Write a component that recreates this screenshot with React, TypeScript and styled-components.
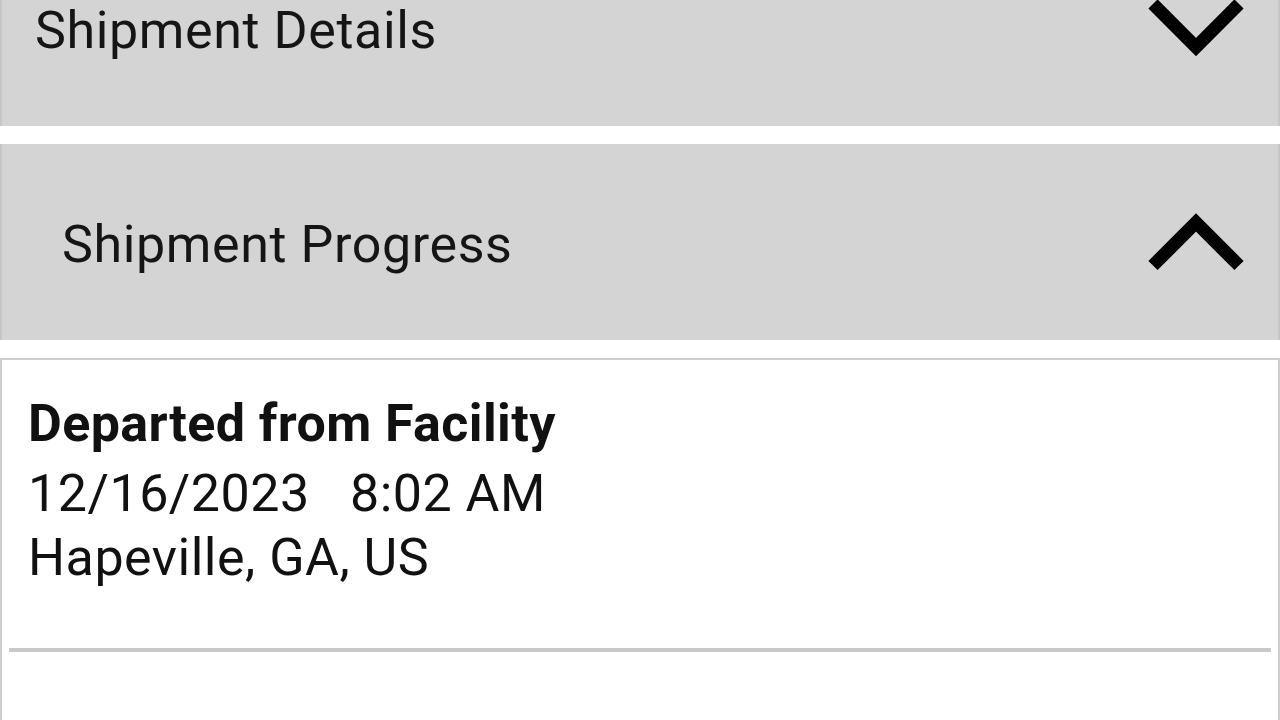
import styled, { createGlobalStyle } from 'styled-components';

const GlobalStyle = createGlobalStyle`
  html, body {
    margin: 0;
    padding: 0;
    background: #ffffff;
  }
  body {
    font-family: Roboto, "Liberation Sans", Arial, sans-serif;
    color: #111111;
  }
`;

// Styling/CSS
const SCREEN = styled.div`
  width: 1280px;
  height: 720px;
  overflow: hidden;
  background: #ffffff;
`;

// the list is scrolled a little, so the first header sits partly off screen
const LIST = styled.div`
  display: flex;
  flex-direction: column;
  gap: 18px;
  margin-top: -70px;
`;

const HEADER = styled.div<{ $indent: number }>`
  height: 196px;
  box-sizing: border-box;
  display: flex;
  align-items: center;
  justify-content: space-between;
  padding: 0 34px 0 ${(p) => p.$indent}px;
  background: #d4d4d4;
  border-left: 2px solid #c6c6c6;
  border-right: 2px solid #c6c6c6;
`;

const TITLE = styled.span`
  font-size: 52px;
  font-weight: 400;
  line-height: 52px;
  padding-top: 5px;
  letter-spacing: 0.6px;
  color: #151515;
`;

const PANEL = styled.div`
  border: 2px solid #cfcfcf;
  border-bottom: none;
  padding: 32px 7px 0 7px;
  height: 400px;
  background: #ffffff;
`;

const EVENT = styled.div`
  padding-left: 19px;
  display: flex;
  flex-direction: column;
`;

const EVENT_TITLE = styled.div`
  font-size: 52px;
  font-weight: 700;
  line-height: 64px;
  margin-bottom: 6px;
  letter-spacing: 0.4px;
  color: #111111;
`;

const EVENT_LINE = styled.div`
  font-size: 52px;
  line-height: 64px;
  letter-spacing: 0.5px;
  color: #111111;
  white-space: pre;
`;

const DIVIDER = styled.hr`
  margin: 58px 0 0 0;
  border: none;
  height: 4px;
  background: #c8c8c8;
`;
// End of Styling/CSS

function Chevron({ up }: { up: boolean }) {
  const points = up ? '5,52.5 48,9.5 91,52.5' : '5,5 48,48 91,5';
  return (
    <svg width="96" height="58" viewBox="0 0 96 58" aria-hidden="true">
      <polyline
        points={points}
        fill="none"
        stroke="#000000"
        strokeWidth="13"
        strokeLinecap="butt"
        strokeLinejoin="miter"
      />
    </svg>
  );
}

export default function App() {
  return (
    <>
      <GlobalStyle />
      <SCREEN>
        <LIST>
          <HEADER $indent={33}>
            <TITLE>Shipment Details</TITLE>
            <Chevron up={false} />
          </HEADER>

          <HEADER $indent={60}>
            <TITLE>Shipment Progress</TITLE>
            <Chevron up={true} />
          </HEADER>

          <PANEL>
            <EVENT>
              <EVENT_TITLE>Departed from Facility</EVENT_TITLE>
              <EVENT_LINE>{'12/16/2023   8:02 AM'}</EVENT_LINE>
              <EVENT_LINE>Hapeville, GA, US</EVENT_LINE>
            </EVENT>
            <DIVIDER />
          </PANEL>
        </LIST>
      </SCREEN>
    </>
  );
}
